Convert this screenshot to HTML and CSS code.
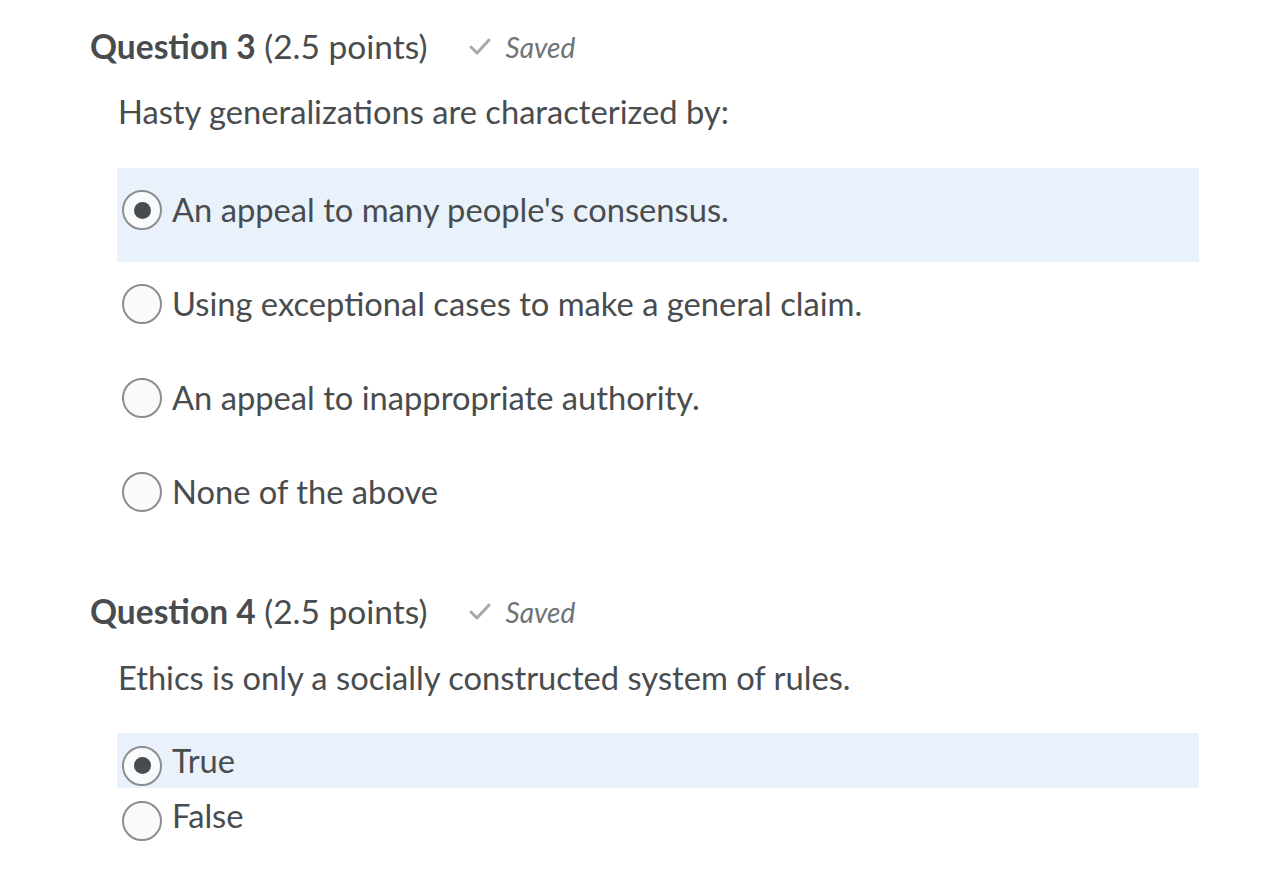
FILE: index.html
```html
<!DOCTYPE html>
<html lang="en">

<head>
  <meta charset="UTF-8">
  <title>Quiz</title>
  <link rel="stylesheet" href="styles.css">
</head>

<body>
  <div class="quiz">
    <div class="question">
      <div class="q-head">
        <span class="q-title"><b>Question 3</b> (2.5 points)</span>
        <span class="saved">
          <svg class="check" width="24" height="20" viewBox="0 0 24 20"><polyline points="3,10 9,16 21,3" /></svg>
          Saved
        </span>
      </div>
      <div class="q-text">Hasty generalizations are characterized by:</div>
      <div class="options">
        <label class="option tall selected"><span class="radio"><span class="dot"></span></span>An appeal to many people's consensus.</label>
        <label class="option tall"><span class="radio"></span>Using exceptional cases to make a general claim.</label>
        <label class="option tall"><span class="radio"></span>An appeal to inappropriate authority.</label>
        <label class="option tall"><span class="radio"></span>None of the above</label>
      </div>
    </div>

    <div class="question">
      <div class="q-head">
        <span class="q-title"><b>Question 4</b> (2.5 points)</span>
        <span class="saved">
          <svg class="check" width="24" height="20" viewBox="0 0 24 20"><polyline points="3,10 9,16 21,3" /></svg>
          Saved
        </span>
      </div>
      <div class="q-text">Ethics is only a socially constructed system of rules.</div>
      <div class="options">
        <label class="option short selected"><span class="radio"><span class="dot"></span></span>True</label>
        <label class="option short"><span class="radio"></span>False</label>
      </div>
    </div>
  </div>
</body>

</html>
```

FILE: styles.css
```css
body {
  margin: 0;
  background-color: #fff;
  font-family: Lato, "Open Sans", sans-serif;
  color: #494c4e;
}

.quiz {
  padding: 30px 0 0 90px;
  width: 1109px;
}

.question {
  margin-bottom: 52px;
}

.q-head {
  display: flex;
  align-items: center;
  height: 33px;
}

.q-title {
  font-size: 33.5px;
  line-height: 1;
}

.q-title b {
  font-weight: 700;
}

.saved {
  display: flex;
  align-items: center;
  margin-left: 41px;
  font-style: italic;
  font-size: 28px;
  line-height: 1;
  color: #6e7376;
}

.check {
  margin-right: 13px;
}

.check polyline {
  fill: none;
  stroke: #a5a9ac;
  stroke-width: 3;
  stroke-linecap: round;
  stroke-linejoin: round;
}

.q-text {
  margin: 33px 0 39px 28px;
  font-size: 32.7px;
  line-height: 1;
}

.options {
  margin-left: 27px;
}

.option {
  display: flex;
  align-items: center;
  font-size: 32.7px;
  line-height: 1;
  padding-left: 5px;
}

.option.tall {
  height: 85px;
  padding-bottom: 9px;
}

.option.short {
  height: 55px;
}

.option.short .radio {
  margin-top: 10px;
}

.option.selected {
  background-color: #e9f1fb;
}

.radio {
  display: flex;
  align-items: center;
  justify-content: center;
  width: 36px;
  height: 36px;
  margin-right: 10px;
  border: 2px solid #8b8e91;
  border-radius: 50%;
  background-color: #f9fafb;
  flex-shrink: 0;
}

.dot {
  width: 17px;
  height: 17px;
  border-radius: 50%;
  background-color: #494c4e;
}
```
